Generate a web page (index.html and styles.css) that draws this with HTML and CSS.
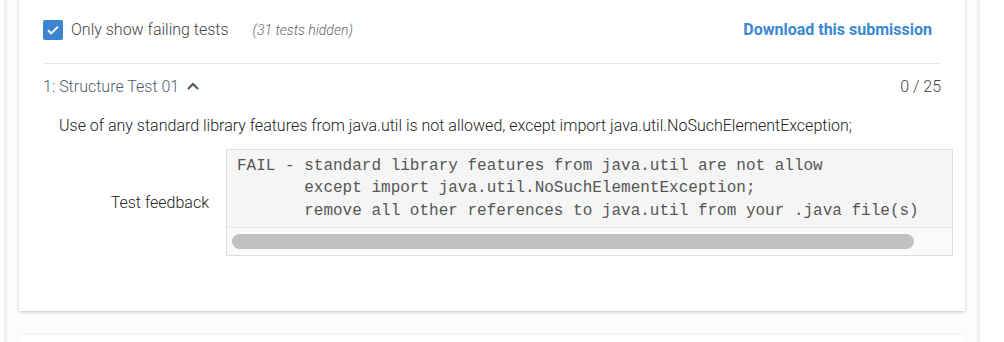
FILE: index.html
```html
<!DOCTYPE html>
<html lang="en">
<head>
    <meta charset="UTF-8">
    <meta name="viewport" content="width=device-width, initial-scale=1.0">
    <title>Submission Results</title>
    <link rel="stylesheet" href="styles.css">
</head>
<body>
    <div class="page">
        <div class="card">
            <div class="toolbar">
                <label class="toggle">
                    <span class="checkbox">
                        <svg width="14" height="14" viewBox="0 0 14 14"><path d="M2 7.2l3.2 3.2L12 3.6" fill="none" stroke="#fff" stroke-width="2"/></svg>
                    </span>
                    Only show failing tests
                </label>
                <span class="hidden-count">(31 tests hidden)</span>
                <a class="download" href="#">Download this submission</a>
            </div>

            <div class="test">
                <div class="test-head">
                    <span class="test-name">
                        1: Structure Test 01
                        <svg class="chevron" width="12" height="8" viewBox="0 0 12 8"><path d="M1 7l5-5 5 5" fill="none" stroke="#4c5862" stroke-width="2"/></svg>
                    </span>
                    <span class="score">0 / 25</span>
                </div>
                <p class="test-desc">Use of any standard library features from java.util is not allowed, except import java.util.NoSuchElementException;</p>
                <div class="feedback-row">
                    <div class="feedback-label">Test feedback</div>
                    <div class="feedback-box">
<pre>FAIL - standard library features from java.util are not allow
       except import java.util.NoSuchElementException;
       remove all other references to java.util from your .java file(s)</pre>
                        <div class="scrollbar"><div class="thumb"></div></div>
                    </div>
                </div>
            </div>
        </div>

        <div class="card card-next"></div>
    </div>
</body>
</html>
```

FILE: styles.css
```css
/* Global Styling */
* {
    margin: 0;
    padding: 0;
    box-sizing: border-box;
}

body {
    font-family: Roboto, "Liberation Sans", sans-serif;
    background: #ffffff;
    height: 342px;
    overflow: hidden;
}

/* Outer panel */
.page {
    margin: 0 24px 0 4px;
    padding: 0 12px;
    border-left: 3px solid #f0f0f0;
    border-right: 3px solid #f0f0f0;
    background: #fcfcfc;
    height: 342px;
    overflow: hidden;
}

/* Cards */
.card {
    background: #ffffff;
    padding: 0 24px 55px 24px;
    box-shadow: 0 1px 3px rgba(0, 0, 0, 0.22);
    margin-bottom: 24px;
}

.card-next {
    height: 8px;
    padding: 0;
    margin-bottom: 0;
    box-shadow: 0 -1px 3px rgba(0, 0, 0, 0.06);
}

/* Toolbar */
.toolbar {
    display: flex;
    align-items: center;
    height: 64px;
    padding-bottom: 4px;
    border-bottom: 1px solid #e6e6e6;
}

.toggle {
    display: flex;
    align-items: center;
    gap: 8px;
    font-size: 16px;
    font-weight: 300;
    color: #444444;
}

.checkbox {
    display: flex;
    align-items: center;
    justify-content: center;
    width: 20px;
    height: 20px;
    border-radius: 2px;
    background: #3b86cf;
}

.hidden-count {
    margin-left: 24px;
    font-size: 14px;
    font-style: italic;
    font-weight: 300;
    color: #666666;
}

.download {
    margin-left: auto;
    margin-right: 9px;
    font-size: 16px;
    font-weight: bold;
    color: #3a88d1;
    text-decoration: none;
}

/* Test Result */
.test-head {
    display: flex;
    justify-content: space-between;
    align-items: center;
    height: 42px;
    padding-top: 2px;
    font-size: 16px;
    font-weight: 300;
}

.test-name {
    display: flex;
    align-items: center;
    gap: 8px;
    color: #4f5e6b;
}

.score {
    color: #444444;
}

.test-desc {
    padding: 10px 0 0 16px;
    font-size: 16px;
    font-weight: 300;
    line-height: 20px;
    color: #222222;
    height: 43px;
}

/* Feedback */
.feedback-row {
    display: grid;
    grid-template-columns: 166px 1fr;
    gap: 17px;
    align-items: center;
    margin-right: -12px;
}

.feedback-label {
    text-align: right;
    font-size: 16px;
    font-weight: 300;
    color: #222222;
}

.feedback-box {
    background: #f5f5f5;
    border: 1px solid #dddddd;
    overflow: hidden;
}

.feedback-box pre {
    font-family: "Liberation Mono", "Courier New", monospace;
    font-size: 16px;
    line-height: 22.4px;
    color: #555555;
    padding: 5px 10px 5px 10px;
    overflow: hidden;
}

.scrollbar {
    background: #fafafa;
    border-top: 1px solid #e8e8e8;
    padding: 6px 5px 6px 5px;
}

.thumb {
    width: calc(100% - 33px);
    height: 15px;
    border-radius: 8px;
    background: #c1c1c1;
}
```
